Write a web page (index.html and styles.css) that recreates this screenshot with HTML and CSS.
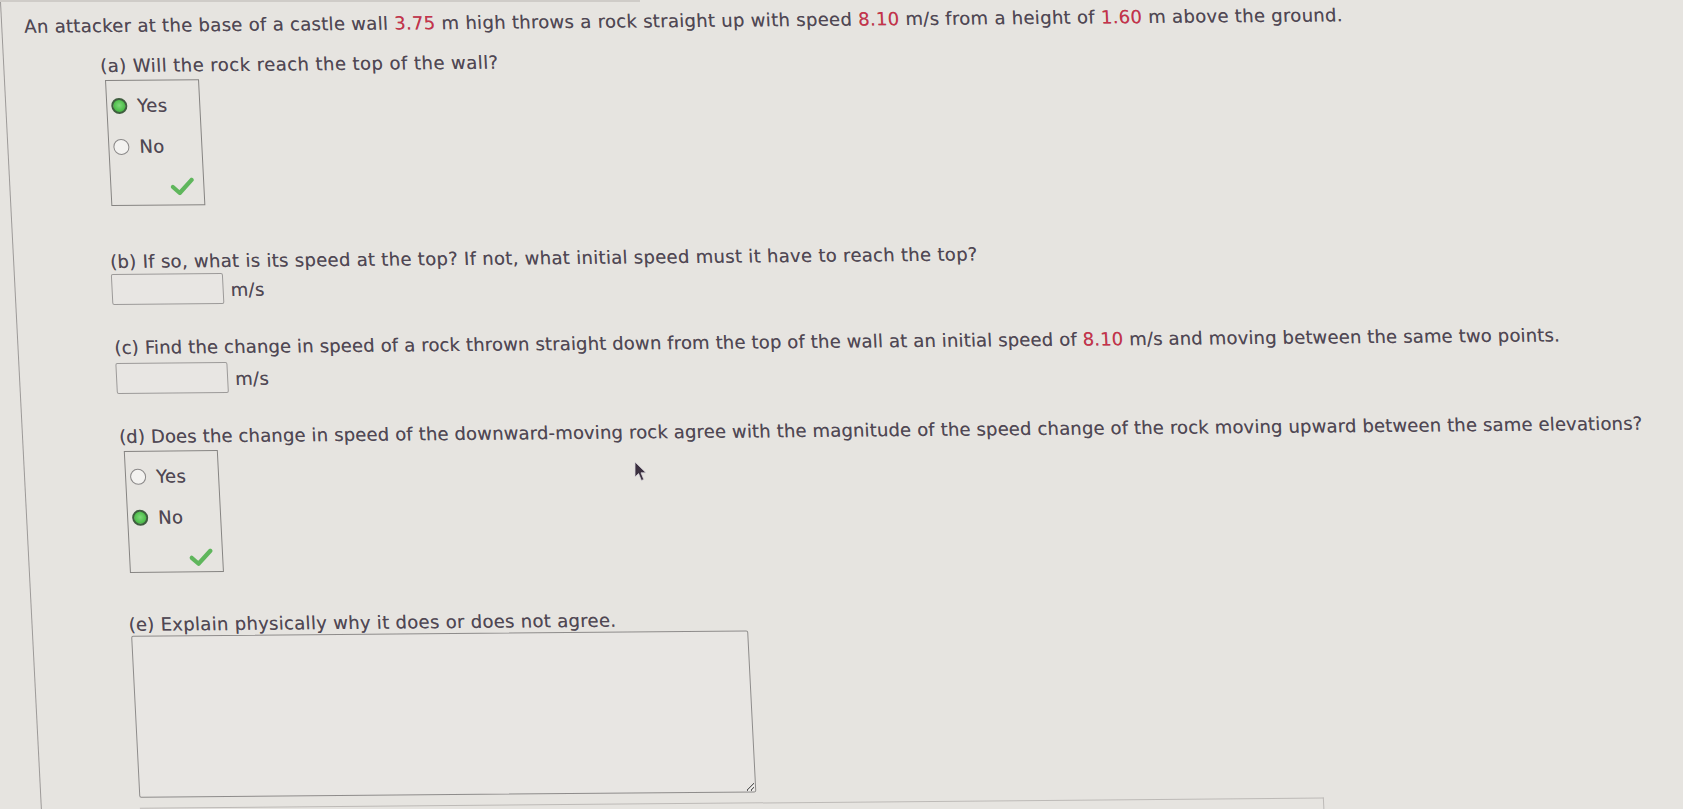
FILE: index.html
```html
<!DOCTYPE html>
<html lang="en">
<head>
<meta charset="utf-8">
<title>Castle wall problem</title>
<link rel="stylesheet" href="styles.css">
</head>
<body>
<div class="topline"></div>
<div class="page">
  <p class="intro">An attacker at the base of a castle wall <span class="num">3.75</span> m high throws a rock straight up with speed <span class="num">8.10</span> m/s from a height of <span class="num">1.60</span> m above the ground.</p>

  <div class="part part-a">
    <p class="question question--short">(a) Will the rock reach the top of the wall?</p>
    <div class="choices">
      <div class="choice"><span class="radio radio--on"></span><span class="label">Yes</span></div>
      <div class="choice"><span class="radio"></span><span class="label">No</span></div>
      <div class="mark">
        <svg width="24" height="18" viewBox="0 0 24 18"><path d="M2.5 9.5 L9 15.5 L21.5 2.5" fill="none" stroke="#5fb65c" stroke-width="4.2" stroke-linecap="round" stroke-linejoin="round"/></svg>
      </div>
    </div>
  </div>

  <div class="part part-b">
    <p class="question">(b) If so, what is its speed at the top? If not, what initial speed must it have to reach the top?</p>
    <div class="answer answer--b">
      <input class="field" type="text"><span class="unit">m/s</span>
    </div>
  </div>

  <div class="part part-c">
    <p class="question question--long">(c) Find the change in speed of a rock thrown straight down from the top of the wall at an initial speed of <span class="num">8.10</span> m/s and moving between the same two points.</p>
    <div class="answer answer--c">
      <input class="field" type="text"><span class="unit">m/s</span>
    </div>
  </div>

  <div class="part part-d">
    <p class="question question--long">(d) Does the change in speed of the downward-moving rock agree with the magnitude of the speed change of the rock moving upward between the same elevations?</p>
    <div class="choices choices--compact">
      <div class="choice"><span class="radio"></span><span class="label">Yes</span></div>
      <div class="choice"><span class="radio radio--on"></span><span class="label">No</span></div>
      <div class="mark">
        <svg width="24" height="18" viewBox="0 0 24 18"><path d="M2.5 9.5 L9 15.5 L21.5 2.5" fill="none" stroke="#5fb65c" stroke-width="4.2" stroke-linecap="round" stroke-linejoin="round"/></svg>
      </div>
    </div>
  </div>

  <div class="part part-e">
    <p class="question question--tight">(e) Explain physically why it does or does not agree.</p>
    <textarea class="essay"></textarea>
  </div>

  <div class="footer-box"></div>
</div>

<svg class="cursor" width="14" height="22" viewBox="0 0 14 22"><path d="M1 1 L1 16 L4.6 12.6 L7.4 19.5 L9.8 18.5 L7 11.8 L12 11.8 Z" fill="#3b3040" stroke="#d9d5da" stroke-width="0.8" stroke-linejoin="round"/></svg>
</body>
</html>
```

FILE: styles.css
```css
html, body {
  margin: 0;
  padding: 0;
}

body {
  background: #e6e4e0;
  color: #4f4753;
  font-family: "DejaVu Sans", Verdana, sans-serif;
  font-size: 18px;
  letter-spacing: 0.3px;
  line-height: 20px;
  text-shadow: 0 0 0.6px rgba(79, 71, 83, 0.55);
  overflow: hidden;
  height: 809px;
  position: relative;
}

.topline {
  height: 2px;
  width: 640px;
  background: #cfccc8;
}

.page {
  border-left: 1px solid #9d9a98;
  padding-top: 15px;
  min-height: 900px;
  transform-origin: 0 0;
  transform: rotate(-0.5deg) skewX(2.4deg);
}

p {
  margin: 0;
}

.intro {
  margin-left: 22px;
  white-space: nowrap;
}

.num {
  color: #c8324a;
}

.part {
  margin-left: 96px;
}

.part-a {
  margin-top: 20px;
}

.part-b {
  margin-top: 46px;
}

.part-c,
.part-d {
  margin-top: 33px;
}

.part-e {
  margin-top: 42px;
}

.question {
  white-space: nowrap;
}

.question--short {
  letter-spacing: 0.45px;
}

.question--long {
  letter-spacing: 0.15px;
}

.question--tight {
  margin-bottom: 1px;
}

.choices {
  margin-top: 4px;
  margin-left: 4px;
  width: 94px;
  height: 126px;
  box-sizing: border-box;
  border: 1px solid #868482;
  padding: 4px 9px 0 4px;
  display: flex;
  flex-direction: column;
}

.choices--compact {
  height: 122px;
}

.choice {
  height: 41px;
  display: flex;
  align-items: center;
  gap: 10px;
}

.radio {
  width: 16px;
  height: 16px;
  box-sizing: border-box;
  border-radius: 50%;
  border: 1.5px solid #8a8888;
  background: #f3f2f0;
  flex: none;
}

.radio--on {
  border: 2.5px solid #3f5e3f;
  background: radial-gradient(circle at 50% 45%, #7fd97a 0%, #4fbf4c 60%, #3f9c3d 100%);
}

.mark {
  margin-top: 11px;
  display: flex;
  justify-content: flex-end;
}

.answer {
  display: flex;
  align-items: center;
  gap: 7px;
}

.answer--b {
  margin-top: 2px;
}

.answer--c {
  margin-top: 5px;
}

.field {
  width: 112px;
  height: 31px;
  box-sizing: border-box;
  border: 1px solid #9c9a99;
  border-radius: 2px;
  background: #e8e6e3;
  margin: 0;
  padding: 0;
}

.unit {
  position: relative;
  top: 1px;
}

.essay {
  display: block;
  width: 617px;
  height: 162px;
  box-sizing: border-box;
  border: 1px solid #8e8c8b;
  border-radius: 2px;
  background: #e8e6e3;
  margin: 0 0 0 2px;
  resize: both;
}

.footer-box {
  margin-top: 10px;
  margin-left: 98px;
  width: 1183px;
  height: 60px;
  border-top: 1.5px solid #bdbab7;
  border-right: 1.5px solid #bdbab7;
}

.cursor {
  position: absolute;
  left: 634px;
  top: 461px;
}
```
